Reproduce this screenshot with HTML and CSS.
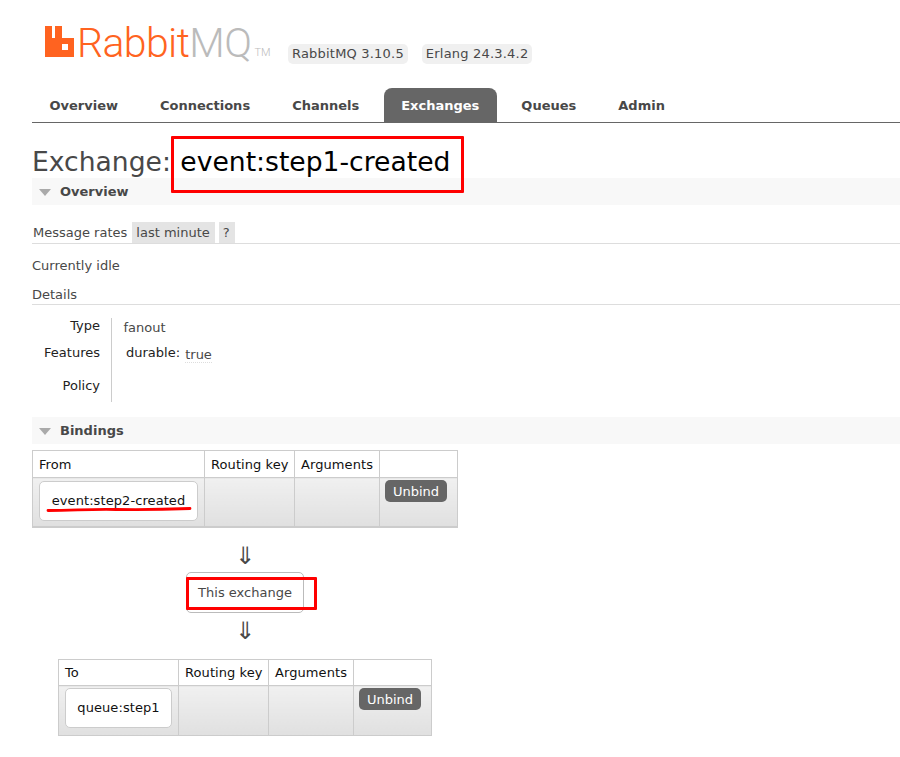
FILE: index.html
```html
<!DOCTYPE html>
<html lang="en">
<head>
    <meta charset="UTF-8">
    <meta name="viewport" content="width=device-width, initial-scale=1.0">
    <title>RabbitMQ Management</title>
    <link rel="stylesheet" href="styles.css">
</head>
<body>
    <header class="top">
        <div class="logo">
            <svg class="logo-mark" width="29" height="31" viewBox="0 0 29 31">
                <path fill="#ff6320" d="M0 0h7v12h3V0h7v12h12v19H0z"/>
                <rect x="17" y="18" width="6" height="6" fill="#fff"/>
            </svg>
            <span class="logo-rabbit">Rabbit</span><span class="logo-mq">MQ</span><span class="logo-tm">TM</span>
        </div>
        <div class="versions">
            <span class="version">RabbitMQ 3.10.5</span>
            <span class="version">Erlang 24.3.4.2</span>
        </div>
    </header>

    <nav class="tabs">
        <a class="tab">Overview</a>
        <a class="tab">Connections</a>
        <a class="tab">Channels</a>
        <a class="tab active">Exchanges</a>
        <a class="tab">Queues</a>
        <a class="tab">Admin</a>
    </nav>

    <main class="main">
        <h1 class="title">Exchange: <b class="title-name">event:step1-created</b></h1>

        <section class="section">
            <h2 class="section-head"><i class="triangle"></i>Overview</h2>
            <div class="rates">
                <span>Message rates</span>
                <span class="chip">last minute</span>
                <span class="chip chip-help">?</span>
            </div>
            <p class="idle">Currently idle</p>
            <h3 class="details">Details</h3>
            <table class="facts">
                <tr class="facts-type"><th>Type</th><td>fanout</td></tr>
                <tr class="facts-features">
                    <th>Features</th>
                    <td><span class="feature-key">durable:</span> <abbr class="feature-val">true</abbr></td>
                </tr>
                <tr class="facts-policy"><th>Policy</th><td></td></tr>
            </table>
        </section>

        <section class="section">
            <h2 class="section-head"><i class="triangle"></i>Bindings</h2>
            <div class="bindings">
                <table class="list">
                    <tr>
                        <th class="col-node-a">From</th>
                        <th class="col-key">Routing key</th>
                        <th class="col-args">Arguments</th>
                        <th class="col-btn"></th>
                    </tr>
                    <tr>
                        <td><span class="node">event:step2-created</span></td>
                        <td></td>
                        <td></td>
                        <td class="cell-btn"><button class="unbind">Unbind</button></td>
                    </tr>
                </table>

                <div class="arrow">&#8659;</div>
                <div class="this-exchange">This exchange</div>
                <div class="arrow">&#8659;</div>

                <table class="list list-to">
                    <tr>
                        <th class="col-node-b">To</th>
                        <th class="col-key">Routing key</th>
                        <th class="col-args">Arguments</th>
                        <th class="col-btn"></th>
                    </tr>
                    <tr>
                        <td><span class="node">queue:step1</span></td>
                        <td></td>
                        <td></td>
                        <td class="cell-btn"><button class="unbind">Unbind</button></td>
                    </tr>
                </table>
            </div>
        </section>
    </main>

    <!-- red annotations drawn over the screenshot -->
    <div class="mark mark-title"></div>
    <div class="mark mark-exchange"></div>
    <svg class="mark-line" width="150" height="8" viewBox="0 0 150 8">
        <path d="M2 5.5C30 5.5 40 4 70 4.5S120 4.5 144 3.5" fill="none" stroke="#ff0000" stroke-width="2.8" stroke-linecap="round"/>
    </svg>
</body>
</html>
```

FILE: styles.css
```css
* {
    box-sizing: border-box;
}
body {
    margin: 0;
    padding: 0;
    height: 757px;
    overflow: hidden;
    position: relative;
    background-color: #fff;
    color: #484848;
    font-family: "DejaVu Sans", Verdana, sans-serif;
    font-size: 13px;
}
.top {
    display: flex;
    height: 88px;
    padding: 24px 0 0 45px;
}
.logo {
    display: flex;
    align-items: flex-start;
    height: 40px;
    width: 243px;
    font-family: Roboto, sans-serif;
    font-weight: 300;
    font-size: 41px;
    line-height: 38px;
    letter-spacing: -0.6px;
}
.logo-mark {
    flex: none;
    margin: 2px 3px 0 0;
}
.logo-rabbit {
    color: #ff6320;
}
.logo-mq {
    color: #bbb;
}
.logo-tm {
    color: #bbb;
    font-size: 11px;
    line-height: 14px;
    letter-spacing: 0;
    margin: 22px 0 0 3px;
}
.versions {
    display: flex;
    gap: 14px;
    padding-top: 20px;
    letter-spacing: 0.2px;
}
.version {
    height: 20px;
    padding: 0 4px;
    line-height: 19px;
    background-color: #f0f0f0;
    border-radius: 5px;
}
.tabs {
    display: flex;
    gap: 7px;
    height: 35px;
    margin-left: 32px;
    padding-left: 0;
    border-bottom: 1px solid #666;
}
.tab {
    height: 34px;
    padding: 0 17.5px;
    line-height: 36px;
    font-weight: bold;
    color: #484848;
}
.tab.active {
    background-color: #666;
    color: #fff;
    border-radius: 8px 8px 0 0;
}
.main {
    padding-left: 32px;
}
.title {
    margin: 0;
    height: 55px;
    padding-top: 22px;
    font-size: 26.6px;
    line-height: 34px;
    font-weight: normal;
    color: #484848;
    white-space: nowrap;
}
.title-name {
    font-weight: normal;
    color: #000;
    margin-left: 1px;
}
.section {
    margin-bottom: 15px;
}
.section-head {
    display: flex;
    align-items: center;
    margin: 0;
    height: 27px;
    background-color: #f8f8f8;
    font-size: 13px;
    font-weight: bold;
    color: #484848;
}
.triangle {
    width: 0;
    height: 0;
    margin: 2px 9px 0 7px;
    border-left: 6.5px solid transparent;
    border-right: 6.5px solid transparent;
    border-top: 7px solid #aaa;
}
.rates {
    display: flex;
    align-items: center;
    height: 22px;
    margin-top: 17px;
    border-bottom: 1px solid #ddd;
    gap: 4px;
}
.chip {
    height: 21px;
    padding: 0 5px 0 4px;
    line-height: 21px;
    background-color: #e4e4e4;
}
.rates > span:first-child {
    margin: 0 1px;
}
.idle {
    margin: 14px 0 0;
    line-height: 16px;
}
.details {
    margin: 13px 0 0;
    height: 18px;
    font-size: 13px;
    font-weight: normal;
    line-height: 16px;
    border-bottom: 1px solid #ddd;
}
.facts {
    margin-top: 13px;
    border-collapse: collapse;
}
.facts th {
    width: 79px;
    padding: 0 10.5px 0 0;
    text-align: right;
    font-weight: normal;
    color: #222;
    vertical-align: top;
}
.facts td {
    padding: 0 0 0 12px;
    vertical-align: top;
    border-left: 1px solid #ccc;
}
.facts-type th,
.facts-type td {
    height: 27px;
}
.facts-type td {
    padding-top: 2px;
}
.facts-features th,
.facts-features td {
    height: 33px;
}
.facts-features td {
    padding-left: 14.5px;
}
.facts-policy th,
.facts-policy td {
    height: 24px;
}
.feature-key {
    color: #222;
}
.feature-val {
    position: relative;
    top: 2px;
    margin-left: 1px;
    border-bottom: 1px dotted #ddd;
}
.bindings {
    display: flex;
    flex-direction: column;
    align-items: center;
    width: 426px;
    margin-top: 6px;
}
.list {
    border-collapse: collapse;
    table-layout: fixed;
    color: #111;
    width: 426px;
    letter-spacing: 0.08px;
    border: 1px solid #ccc;
    border-bottom-width: 2px;
}
.col-node-a {
    width: 172px;
}
.col-node-b {
    width: 120px;
}
.col-key {
    width: 90px;
}
.col-args {
    width: 85px;
}
.list th {
    height: 27px;
    padding: 0 6px;
    text-align: left;
    font-weight: normal;
    border: 1px solid #ccc;
    background-color: #fff;
    white-space: nowrap;
}
.list td {
    height: 49px;
    padding: 3px 6px 5px;
    vertical-align: top;
    border: 1px solid #ccc;
    background: linear-gradient(#f0f0f0, #e0e0e0);
}
.list td.cell-btn {
    padding: 2px 5px 5px;
}
.list-to {
    width: 374px;
    margin-top: 14px;
    border-bottom-width: 1px;
}
.list-to th {
    height: 26px;
}
.list-to td {
    height: 50px;
    padding-top: 2px;
}
.node {
    display: block;
    height: 40px;
    line-height: 38px;
    text-align: center;
    background-color: #fff;
    border: 1px solid #ccc;
    border-radius: 5px;
}
.unbind {
    display: block;
    width: 62px;
    height: 22px;
    padding: 0;
    font-family: inherit;
    font-size: 13px;
    color: #fff;
    background-color: #666;
    border: none;
    border-radius: 5px;
}
.arrow {
    height: 28px;
    margin-top: 14px;
    font-size: 24px;
    line-height: 28px;
    color: #484848;
}
.this-exchange {
    width: 118px;
    height: 41px;
    margin-top: 2px;
    line-height: 40px;
    text-align: center;
    border: 1px solid #bbb;
    border-radius: 5px;
}
.this-exchange + .arrow {
    margin-top: 4px;
}
.mark {
    position: absolute;
    border: 3px solid #ff0000;
    border-radius: 1px;
}
.mark-title {
    left: 171px;
    top: 136px;
    width: 293px;
    height: 57px;
}
.mark-exchange {
    left: 186px;
    top: 577px;
    width: 131px;
    height: 33px;
}
.mark-line {
    position: absolute;
    left: 46px;
    top: 505px;
}
```
